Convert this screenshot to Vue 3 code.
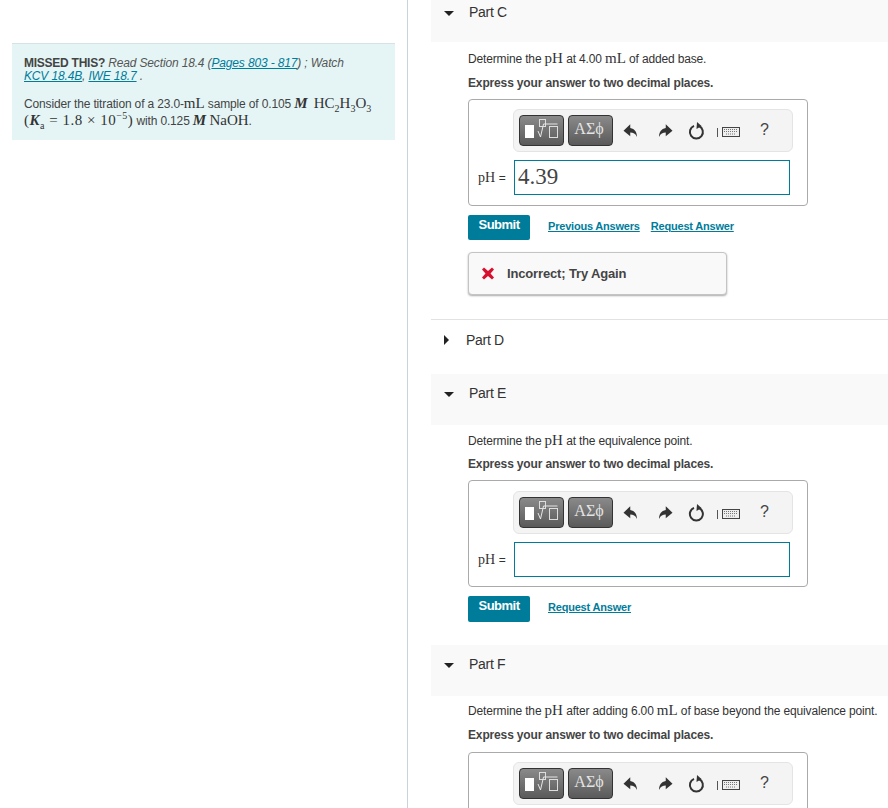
<script setup>
const parts = {
  C: { links: ['Previous Answers', 'Request Answer'], value: '4.39' },
  E: { links: ['Request Answer'], value: '' },
  F: { links: [], value: '' }
}
</script>

<template>
  <div class="page">
    <aside class="left">
      <section class="note">
        <p class="missed"><b>MISSED THIS?</b> <i>Read Section 18.4 (<a>Pages 803 - 817</a>) ; Watch<br><a>KCV 18.4B</a>, <a>IWE 18.7</a> .</i></p>
        <p class="problem">Consider the titration of a 23.0-<span class="m">mL</span> sample of 0.105 <span class="m mi">M</span> <span class="m hc">HC<sub>2</sub>H<sub>3</sub>O<sub>3</sub></span><br><span class="m ka">(<span class="mi">K</span><sub>a</sub> = 1.8 × 10<sup>−5</sup>)</span> with 0.125 <span class="m mi">M</span> <span class="m">NaOH</span>.</p>
      </section>
    </aside>
    <main class="right">
      <!-- Part C -->
      <div class="part-head first"><span class="tri down"></span>Part C</div>
      <div class="body c">
        <p class="q">Determine the <span class="m">pH</span> at 4.00 <span class="m">mL</span> of added base.</p>
        <p class="ex">Express your answer to two decimal places.</p>
        <div class="box">
          <div class="toolbar">
            <span class="tbtn"><svg width="45" height="31" viewBox="0 0 45 31"><rect x="6" y="10" width="9" height="13" fill="#fff"/><rect x="20.5" y="4.5" width="6" height="7" fill="none" stroke="#ddd"/><path d="M19 16l2.500 6 3-13h14" fill="none" stroke="#e6e6e6"/><rect x="30.500" y="11.500" width="8" height="11" fill="none" stroke="#ddd"/></svg></span>
            <span class="tbtn greek">ΑΣϕ</span>
            <span class="ic first"><svg width="18" height="18" viewBox="0 0 24 24"><path d="M11 8V3L2 11.500l9 7.500v-5c4 0 7 1.500 9 6 0-6-3-11-9-12z" fill="#333"/></svg></span>
            <span class="ic"><svg width="18" height="18" viewBox="0 0 24 24"><path d="M13 8V3l9 8.500-9 7.500v-5c-4 0-7 1.500-9 6 0-6 3-11 9-12z" fill="#333"/></svg></span>
            <span class="ic reset"><svg width="18" height="18" viewBox="0 0 18 18"><path d="M6 3.900a6.500 6.500 0 1 0 5 .100" fill="none" stroke="#333" stroke-width="2"/><path d="M9 0l-.5 7L13.500 4z" fill="#333"/></svg></span>
            <span class="kb"><svg width="24" height="12" viewBox="0 0 24 12"><path d="M.5 2v9" stroke="#555"/><rect x="5.500" y="1.500" width="17" height="9" fill="#eee" stroke="#444"/><path d="M7 3.500h14M7 5.500h14M9 8h10" stroke="#777" stroke-dasharray="1 1"/></svg></span>
            <span class="help">?</span>
          </div>
          <div class="answer">
            <label class="m">pH <span class="eq">=</span></label>
            <div class="field">{{ parts.C.value }}</div>
          </div>
        </div>
        <div class="actions">
          <span class="submit">Submit</span>
          <a v-for="l in parts.C.links" :key="l" class="act">{{ l }}</a>
        </div>
        <div class="feedback">
          <svg width="14" height="13" viewBox="0 0 14 13"><path d="M1 2.500 3 .5 7 4l4-3.500 2 2L9.500 6.500l3.500 4-2 2-4-3.500-4 3.500-2-2 3.500-4z" fill="#d6102f"/></svg>
          <span>Incorrect; Try Again</span>
        </div>
      </div>
      <hr class="rule">
      <!-- Part D -->
      <div class="part-closed"><span class="tri side"></span>Part D</div>
      <!-- Part E -->
      <div class="part-head"><span class="tri down"></span>Part E</div>
      <div class="body e">
        <p class="q">Determine the <span class="m">pH</span> at the equivalence point.</p>
        <p class="ex">Express your answer to two decimal places.</p>
        <div class="box">
          <div class="toolbar">
            <span class="tbtn"><svg width="45" height="31" viewBox="0 0 45 31"><rect x="6" y="10" width="9" height="13" fill="#fff"/><rect x="20.5" y="4.5" width="6" height="7" fill="none" stroke="#ddd"/><path d="M19 16l2.500 6 3-13h14" fill="none" stroke="#e6e6e6"/><rect x="30.500" y="11.500" width="8" height="11" fill="none" stroke="#ddd"/></svg></span>
            <span class="tbtn greek">ΑΣϕ</span>
            <span class="ic first"><svg width="18" height="18" viewBox="0 0 24 24"><path d="M11 8V3L2 11.500l9 7.500v-5c4 0 7 1.500 9 6 0-6-3-11-9-12z" fill="#333"/></svg></span>
            <span class="ic"><svg width="18" height="18" viewBox="0 0 24 24"><path d="M13 8V3l9 8.500-9 7.500v-5c-4 0-7 1.500-9 6 0-6 3-11 9-12z" fill="#333"/></svg></span>
            <span class="ic reset"><svg width="18" height="18" viewBox="0 0 18 18"><path d="M6 3.900a6.500 6.500 0 1 0 5 .100" fill="none" stroke="#333" stroke-width="2"/><path d="M9 0l-.5 7L13.500 4z" fill="#333"/></svg></span>
            <span class="kb"><svg width="24" height="12" viewBox="0 0 24 12"><path d="M.5 2v9" stroke="#555"/><rect x="5.500" y="1.500" width="17" height="9" fill="#eee" stroke="#444"/><path d="M7 3.500h14M7 5.500h14M9 8h10" stroke="#777" stroke-dasharray="1 1"/></svg></span>
            <span class="help">?</span>
          </div>
          <div class="answer">
            <label class="m">pH <span class="eq">=</span></label>
            <div class="field"></div>
          </div>
        </div>
        <div class="actions">
          <span class="submit">Submit</span>
          <a v-for="l in parts.E.links" :key="l" class="act">{{ l }}</a>
        </div>
      </div>
      <!-- Part F -->
      <div class="part-head later"><span class="tri down"></span>Part F</div>
      <div class="body f">
        <p class="q">Determine the <span class="m">pH</span> after adding 6.00 <span class="m">mL</span> of base beyond the equivalence point.</p>
        <p class="ex">Express your answer to two decimal places.</p>
        <div class="box">
          <div class="toolbar">
            <span class="tbtn"><svg width="45" height="31" viewBox="0 0 45 31"><rect x="6" y="10" width="9" height="13" fill="#fff"/><rect x="20.5" y="4.5" width="6" height="7" fill="none" stroke="#ddd"/><path d="M19 16l2.500 6 3-13h14" fill="none" stroke="#e6e6e6"/><rect x="30.500" y="11.500" width="8" height="11" fill="none" stroke="#ddd"/></svg></span>
            <span class="tbtn greek">ΑΣϕ</span>
            <span class="ic first"><svg width="18" height="18" viewBox="0 0 24 24"><path d="M11 8V3L2 11.500l9 7.500v-5c4 0 7 1.500 9 6 0-6-3-11-9-12z" fill="#333"/></svg></span>
            <span class="ic"><svg width="18" height="18" viewBox="0 0 24 24"><path d="M13 8V3l9 8.500-9 7.500v-5c-4 0-7 1.500-9 6 0-6 3-11 9-12z" fill="#333"/></svg></span>
            <span class="ic reset"><svg width="18" height="18" viewBox="0 0 18 18"><path d="M6 3.900a6.500 6.500 0 1 0 5 .100" fill="none" stroke="#333" stroke-width="2"/><path d="M9 0l-.5 7L13.500 4z" fill="#333"/></svg></span>
            <span class="kb"><svg width="24" height="12" viewBox="0 0 24 12"><path d="M.5 2v9" stroke="#555"/><rect x="5.500" y="1.500" width="17" height="9" fill="#eee" stroke="#444"/><path d="M7 3.500h14M7 5.500h14M9 8h10" stroke="#777" stroke-dasharray="1 1"/></svg></span>
            <span class="help">?</span>
          </div>
        </div>
      </div>
    </main>
  </div>
</template>

<style>
html, body { margin: 0; overflow: hidden; background: #fff; }
</style>

<style scoped>
.page { display: flex; width: 888px; height: 808px; overflow: hidden; font-family: "Liberation Sans", Arial, sans-serif; font-size: 12px; letter-spacing: -.15px; color: #333; }
.left { width: 407px; box-sizing: content-box; border-right: 1px solid #c8d4dd; flex: none; padding-top: 43px; }
.note { margin-left: 12px; width: 383px; height: 97px; box-sizing: border-box; background: #e5f5f6; border-top: 1px solid #d8e2e6; padding: 13px 12px 0; color: #555; line-height: 13px; }
.note p { margin: 0; }
.missed b { letter-spacing: -.25px; color: #444; }
.problem { margin-top: 12px !important; line-height: 16px; color: #444; }
a { color: #007c9b; text-decoration: underline; }
.m { font-family: "Liberation Serif", "Times New Roman", serif; font-size: 15px; letter-spacing: 0; color: #333; }
.mi { font-style: italic; font-weight: bold; }
.hc { margin-left: 3px; }
.ka { letter-spacing: .5px; }
sub, sup { font-size: 10px; line-height: 0; }
.right { flex: 1; min-width: 0; margin-top: -9px; padding-left: 23px; }
.part-head { height: 51px; box-sizing: border-box; background: #f9f9f9; padding: 9px 0 0 13px; display: flex; align-items: flex-start; font-size: 14px; letter-spacing: -.3px; line-height: 20px; color: #333; }
.part-head.first { padding-top: 11px; }
.later { margin-top: 23px; }
.tri { display: inline-block; width: 0; height: 0; flex: none; }
.down { border-left: 5px solid transparent; border-right: 5px solid transparent; border-top: 5px solid #222; margin: 9px 15px 0 0; }
.side { border-top: 5px solid transparent; border-bottom: 5px solid transparent; border-left: 5px solid #222; margin: 5px 17px 0 0; }
.part-closed { height: 54px; box-sizing: border-box; padding: 10px 0 0 13px; display: flex; align-items: flex-start; font-size: 14px; letter-spacing: -.3px; line-height: 20px; }
.body { padding-left: 37px; }
.q { margin: 0; line-height: 17px; white-space: nowrap; color: #333; }
.ex { margin: 0; height: 24px; line-height: 17px; font-weight: bold; color: #444; white-space: nowrap; }
.body.c { padding-top: 8px; }
.body.c .q { height: 25px; }
.body.e { padding-top: 7px; }
.body.e .q { height: 24px; }
.body.e .box { padding-top: 10px; }
.body.e .actions { margin-top: 9px; height: 26px; }
.body.f { padding-top: 6px; }
.body.f .q { height: 25px; }
.body.f .ex { height: 25px; }
.box { width: 340px; height: 107px; box-sizing: border-box; border: 1px solid #aaa; border-radius: 4px; padding: 9px 0 0 44px; }
.toolbar { width: 280px; height: 43px; box-sizing: border-box; background: #f4f4f4; border: 1px solid #e4e4e4; border-radius: 6px; padding: 5px 0 0 5px; display: flex; align-items: flex-start; }
.tbtn { width: 45px; height: 31px; box-sizing: border-box; background: linear-gradient(#8a8a8a, #5a5a5a); border: 1px solid #333; border-radius: 4px; margin-right: 4px; display: flex; align-items: center; justify-content: center; flex: none; }
.tbtn svg { margin: -1px; flex: none; }
.greek { font-family: "Liberation Serif", serif; font-size: 16px; letter-spacing: 0; color: #e4e4e4; padding: 0 3px 4px 0; }
.ic { width: 34px; height: 31px; display: flex; align-items: center; justify-content: center; flex: none; }
.ic.first { margin-left: -3px; }
.ic.reset { width: 30px; }
.kb { margin-left: 5px; width: 30px; height: 31px; display: flex; align-items: center; justify-content: flex-start; flex: none; padding-top: 2px; box-sizing: border-box; }
.help { margin-left: 13px; font-size: 16px; line-height: 30px; color: #444; }
.answer { display: flex; align-items: center; margin: 8px 0 0 -35px; height: 35px; }
.answer label { width: 36px; flex: none; font-size: 14px; white-space: nowrap; }
.eq { font-family: "Liberation Sans", sans-serif; font-size: 12px; }
.field { width: 276px; height: 35px; box-sizing: border-box; border: 1px solid #007c9b; padding: 0 3px; font-family: "Liberation Serif", serif; font-size: 23px; letter-spacing: 0; line-height: 31px; color: #444; background: #fff; }
.actions { display: flex; align-items: center; margin-top: 9px; height: 25px; }
.submit { width: 62px; height: 100%; background: #007c9b; border-radius: 2px; color: #fff; font-weight: bold; font-size: 13px; letter-spacing: -.5px; line-height: 20px; text-align: center; margin-right: 18px; }
.act { font-size: 11px; font-weight: bold; letter-spacing: -.2px; margin: 0 11px 4px 0; line-height: 14px; }
.feedback { width: 259px; height: 43px; box-sizing: border-box; margin-top: 12px; background: #f9f9f9; border: 1px solid #c4c4c4; border-radius: 4px; box-shadow: 0 1px 2px #aaa; display: flex; align-items: center; padding-left: 12px; font-size: 13px; font-weight: bold; color: #444; gap: 12px; }
.rule { border: 0; border-top: 1px solid #e2e2e2; margin: 24px 0 0; height: 0; }
</style>
